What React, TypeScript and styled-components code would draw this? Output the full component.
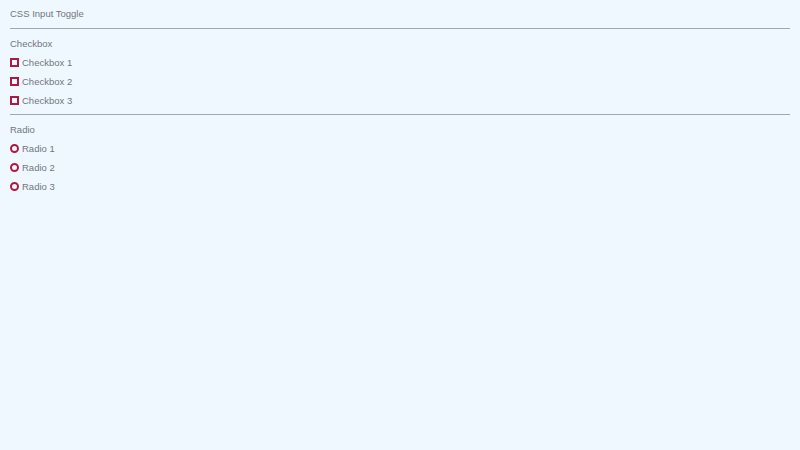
import React from 'react';
import styled, { createGlobalStyle } from 'styled-components';

const GlobalStyle = createGlobalStyle`
  html, body {
    margin: 0;
    padding: 0;
    background: #f0f8ff;
  }
  body {
    font-family: "Liberation Sans", Arial, sans-serif;
    color: #70757f;
  }
`;

const Page = styled.div`
  min-height: 450px;
  padding: 4px 10px 0;
  box-sizing: border-box;
`;

const Title = styled.div`
  font-size: 9.5px;
  line-height: 19px;
  padding-bottom: 5px;
`;

const Divider = styled.hr`
  margin: 0;
  border: none;
  height: 1px;
  background: #a3a7ae;
`;

const Section = styled.div`
  padding: 5px 0 4px;
`;

const Heading = styled.div`
  font-size: 9.5px;
  line-height: 19px;
`;

const Option = styled.label`
  display: flex;
  align-items: center;
  gap: 3px;
  height: 19px;
  font-size: 9.5px;
  cursor: pointer;
`;

const Box = styled.span<{ $round?: boolean }>`
  width: 9px;
  height: 9px;
  box-sizing: border-box;
  border: 2px solid #b3173f;
  border-radius: ${p => (p.$round ? '50%' : '0')};
  background: #f0f8ff;
`;

export default function App() {
  return (
    <>
      <GlobalStyle />
      <Page>
        <Title>CSS Input Toggle</Title>
        <Divider />
        <Section>
          <Heading>Checkbox</Heading>
          {[1, 2, 3].map(n => (
            <Option key={n}>
              <Box />
              Checkbox {n}
            </Option>
          ))}
        </Section>
        <Divider />
        <Section>
          <Heading>Radio</Heading>
          {[1, 2, 3].map(n => (
            <Option key={n}>
              <Box $round />
              Radio {n}
            </Option>
          ))}
        </Section>
      </Page>
    </>
  );
}
